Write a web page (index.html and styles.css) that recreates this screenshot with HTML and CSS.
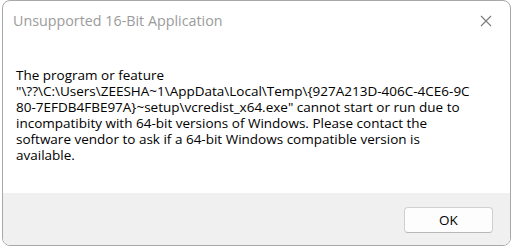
FILE: index.html
```html
<!DOCTYPE html>
<html lang="en">
<head>
  <meta charset="UTF-8" />
  <title>Unsupported 16-Bit Application</title>
  <link rel="stylesheet" href="styles.css">
</head>
<body>
  <div class="dialog">
    <div class="titlebar">
      <span class="title">Unsupported 16-Bit Application</span>
      <button class="close-btn" aria-label="Close">
        <svg width="12" height="12" viewBox="0 0 12 12">
          <path d="M1 1 L11 11 M11 1 L1 11" stroke="#7a7a7a" stroke-width="1.1" fill="none" />
        </svg>
      </button>
    </div>
    <div class="content">
      <p class="message">
        <span class="line">The program or feature</span>
        <span class="line">"\??\C:\Users\ZEESHA~1\AppData\Local\Temp\{927A213D-406C-4CE6-9C</span>
        <span class="line">80-7EFDB4FBE97A}~setup\vcredist_x64.exe" cannot start or run due to</span>
        <span class="line">incompatibity with 64-bit versions of Windows. Please contact the</span>
        <span class="line">software vendor to ask if a 64-bit Windows compatible version is</span>
        <span class="line">available.</span>
      </p>
    </div>
    <div class="footer">
      <button class="ok-btn">OK</button>
    </div>
  </div>
</body>
</html>
```

FILE: styles.css
```css
body {
  margin: 0;
  background: #ffffff;
  font-family: 'Open Sans', 'Noto Sans', sans-serif;
}

.dialog {
  margin-left: 2px;
  width: 509px;
  height: 246px;
  box-sizing: border-box;
  border: 1px solid #a8a8a8;
  border-radius: 8px;
  background: #ffffff;
  display: flex;
  flex-direction: column;
  overflow: hidden;
}

.titlebar {
  height: 40px;
  display: flex;
  align-items: center;
  justify-content: space-between;
  padding-left: 10px;
}

.title {
  font-size: 14.3px;
  color: #9b9b9b;
  margin-top: -2px;
}

.close-btn {
  width: 46px;
  height: 38px;
  border: none;
  background: none;
  display: flex;
  align-items: center;
  justify-content: center;
  margin-right: 1px;
}

.content {
  flex: 1;
  padding: 26px 13px 0;
}

.message {
  margin: 0;
  font-size: 13.5px;
  color: #000000;
  white-space: nowrap;
}

.line {
  display: block;
  height: 16px;
  line-height: 16px;
}

.footer {
  height: 52px;
  background: #f0f0f0;
  display: flex;
  justify-content: flex-end;
  align-items: center;
  padding-right: 17px;
}

.ok-btn {
  width: 89px;
  height: 26px;
  border: 1px solid #d0d0d0;
  border-bottom-color: #b8b8b8;
  border-radius: 4px;
  background: #fdfdfd;
  font-family: inherit;
  font-size: 13.5px;
  color: #000000;
  margin-top: 1px;
}
```
